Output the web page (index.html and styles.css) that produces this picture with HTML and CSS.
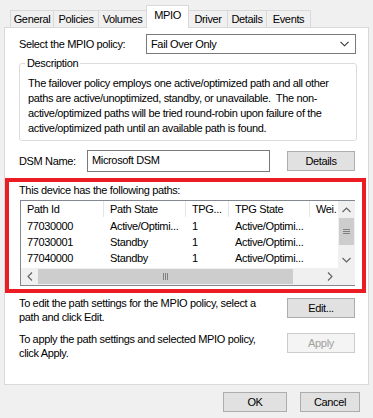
FILE: index.html
```html
<!DOCTYPE html>
<html lang="en">
<head>
    <meta charset="UTF-8">
    <meta name="viewport" content="width=device-width, initial-scale=1.0">
    <title>Properties - MPIO</title>
    <link rel="stylesheet" href="styles.css">
</head>
<body>
    <div class="tabs">
        <div class="tab tab-general">General</div>
        <div class="tab tab-policies">Policies</div>
        <div class="tab tab-volumes">Volumes</div>
        <div class="tab tab-active">MPIO</div>
        <div class="tab tab-driver">Driver</div>
        <div class="tab tab-details">Details</div>
        <div class="tab tab-events">Events</div>
    </div>

    <div class="panel">
        <div class="policy-row">
            <span class="policy-label">Select the MPIO policy:</span>
            <div class="select">
                <span>Fail Over Only</span>
                <svg class="select-arrow" width="9" height="6" viewBox="0 0 9 6"><path d="M0.5 0.8 L4.5 4.8 L8.5 0.8" fill="none" stroke="#333" stroke-width="1.1"/></svg>
            </div>
        </div>

        <fieldset class="group">
            <legend>Description</legend>
            <p class="group-text">The failover policy employs one active/optimized path and all other<br>paths are active/unoptimized, standby, or unavailable.&nbsp; The non-<br>active/optimized paths will be tried round-robin upon failure of the<br>active/optimized path until an available path is found.</p>
        </fieldset>

        <div class="dsm-row">
            <span class="dsm-label">DSM Name:</span>
            <div class="textbox">Microsoft DSM</div>
            <button class="btn">Details</button>
        </div>

        <div class="highlight">
            <div class="paths-label">This device has the following paths:</div>
            <div class="listview">
                <div class="list-body">
                    <div class="list-row list-head">
                        <span class="col col-id">Path Id</span>
                        <span class="col col-state">Path State</span>
                        <span class="col col-tpg">TPG...</span>
                        <span class="col col-tpgstate">TPG State</span>
                        <span class="col col-wei">Wei.</span>
                    </div>
                    <div class="list-row">
                        <span class="col col-id">77030000</span>
                        <span class="col col-state">Active/Optimi...</span>
                        <span class="col col-tpg">1</span>
                        <span class="col col-tpgstate">Active/Optimi...</span>
                        <span class="col col-wei"></span>
                    </div>
                    <div class="list-row">
                        <span class="col col-id">77030001</span>
                        <span class="col col-state">Standby</span>
                        <span class="col col-tpg">1</span>
                        <span class="col col-tpgstate">Active/Optimi...</span>
                        <span class="col col-wei"></span>
                    </div>
                    <div class="list-row">
                        <span class="col col-id">77040000</span>
                        <span class="col col-state">Standby</span>
                        <span class="col col-tpg">1</span>
                        <span class="col col-tpgstate">Active/Optimi...</span>
                        <span class="col col-wei"></span>
                    </div>
                    <div class="list-row">
                        <span class="col col-id">77040001</span>
                        <span class="col col-state">Standby</span>
                        <span class="col col-tpg">1</span>
                        <span class="col col-tpgstate">Active/Optimi...</span>
                        <span class="col col-wei"></span>
                    </div>
                </div>

                <div class="vscroll">
                    <div class="sb-btn">
                        <svg width="9" height="6" viewBox="0 0 9 6"><path d="M0.5 5 L4.5 1 L8.5 5" fill="none" stroke="#606060" stroke-width="1.1"/></svg>
                    </div>
                    <div class="sb-thumb-v">
                        <svg width="7" height="6" viewBox="0 0 7 6"><path d="M0 0.5 H7 M0 2.5 H7 M0 4.5 H7" stroke="#808080" stroke-width="1"/></svg>
                    </div>
                    <div class="sb-track"></div>
                    <div class="sb-btn">
                        <svg width="9" height="6" viewBox="0 0 9 6"><path d="M0.5 1 L4.5 5 L8.5 1" fill="none" stroke="#606060" stroke-width="1.1"/></svg>
                    </div>
                </div>

                <div class="hscroll">
                    <div class="sb-btn">
                        <svg width="6" height="9" viewBox="0 0 6 9"><path d="M5 0.5 L1 4.5 L5 8.5" fill="none" stroke="#606060" stroke-width="1.1"/></svg>
                    </div>
                    <div class="sb-thumb-h">
                        <svg width="6" height="7" viewBox="0 0 6 7"><path d="M0.5 0 V7 M2.5 0 V7 M4.5 0 V7" stroke="#808080" stroke-width="1"/></svg>
                    </div>
                    <div class="sb-track"></div>
                    <div class="sb-btn">
                        <svg width="6" height="9" viewBox="0 0 6 9"><path d="M1 0.5 L5 4.5 L1 8.5" fill="none" stroke="#606060" stroke-width="1.1"/></svg>
                    </div>
                </div>

                <div class="sb-corner"></div>
            </div>
        </div>

        <div class="action-row">
            <p class="action-text">To edit the path settings for the MPIO policy, select a<br>path and click Edit.</p>
            <button class="btn btn-edit">Edit...</button>
        </div>

        <div class="action-row action-apply">
            <p class="action-text">To apply the path settings and selected MPIO policy,<br>click Apply.</p>
            <button class="btn btn-disabled" disabled>Apply</button>
        </div>
    </div>

    <div class="footer">
        <button class="btn btn-ok">OK</button>
        <button class="btn btn-cancel">Cancel</button>
    </div>
</body>
</html>
```

FILE: styles.css
```css
body {
    margin: 0;
    width: 373px;
    height: 418px;
    overflow: hidden;
    background-color: #f0f0f0;
    font-family: "Liberation Sans", Arial, sans-serif;
    font-size: 11px;
    letter-spacing: -0.35px;
    color: #000;
}
p {
    margin: 0;
}

/* tab strip */
.tabs {
    display: flex;
    align-items: flex-end;
    height: 22px;
    margin-top: 5px;
    padding-left: 10px;
}
.tab {
    height: 17px;
    box-sizing: border-box;
    border: 1px solid #d9d9d9;
    border-bottom: none;
    margin-left: -1px;
    line-height: 16px;
    text-align: center;
    background-color: #f0f0f0;
}
.tab-general { width: 44px; margin-left: 0; }
.tab-policies { width: 46px; }
.tab-volumes { width: 49px; }
.tab-driver { width: 40px; }
.tab-details { width: 40px; }
.tab-events { width: 45px; }
.tab-active {
    width: 43px;
    height: 23px;
    margin-bottom: -1px;
    line-height: 19px;
    background-color: #fff;
    position: relative;
    z-index: 1;
}

/* main page */
.panel {
    box-sizing: border-box;
    width: 365px;
    height: 358px;
    margin-left: 4px;
    border: 1px solid #d9d9d9;
    background-color: #fff;
}
.policy-row {
    display: flex;
    align-items: center;
    height: 20px;
    margin-top: 6px;
    padding-left: 14px;
}
.policy-label {
    width: 127px;
}
.select {
    box-sizing: border-box;
    width: 210px;
    height: 20px;
    border: 1px solid #7a7a7a;
    display: flex;
    align-items: center;
    justify-content: space-between;
    padding: 0 6px 0 4px;
}
.group {
    margin: 2px 11px 0 14px;
    padding: 0 4px 4px 8px;
    border: 1px solid #dcdcdc;
    border-radius: 3px;
    min-width: 0;
}
.group legend {
    padding: 0 2px;
    margin-left: -3px;
    line-height: 14px;
}
.group-text {
    margin-top: 6px;
    line-height: 15px;
    white-space: nowrap;
}
.dsm-row {
    display: flex;
    align-items: center;
    height: 22px;
    margin-top: 9px;
    padding-left: 14px;
}
.dsm-label {
    width: 68px;
}
.textbox {
    box-sizing: border-box;
    width: 183px;
    height: 22px;
    border: 1px solid #7a7a7a;
    padding: 3px 0 0 4px;
    margin-right: 17px;
}
.btn {
    box-sizing: border-box;
    width: 68px;
    height: 20px;
    padding: 0;
    border: 1px solid #adadad;
    background-color: #e1e1e1;
    font-family: inherit;
    font-size: 11px;
    letter-spacing: -0.35px;
    color: #000;
}
.btn-disabled {
    border-color: #cccccc;
    background-color: #f4f4f4;
    color: #a0a0a0;
}

/* annotated path list */
.highlight {
    margin: 6px 2px 0 0;
    border: 4px solid #ec1c24;
    padding: 0 0 3px 10px;
}
.paths-label {
    line-height: 16px;
}
.listview {
    box-sizing: border-box;
    width: 335px;
    height: 86px;
    margin: 2px 0 0 1px;
    border: 1px solid #828790;
    display: grid;
    grid-template-columns: 317px 17px;
    grid-template-rows: 67px 17px;
}
.list-body {
    overflow: hidden;
}
.list-row {
    display: flex;
    height: 16px;
    line-height: 16px;
    white-space: nowrap;
}
.col {
    box-sizing: border-box;
    flex: none;
    overflow: hidden;
    padding-left: 6px;
}
.col-id { width: 83px; }
.col-state { width: 82px; }
.col-tpg { width: 43px; }
.col-tpgstate { width: 81px; }
.col-wei { width: 28px; }
.list-head .col {
    border-right: 1px solid #e5e5e5;
}
.list-head .col-wei {
    border-right: none;
}
.list-head {
    margin-bottom: 1px;
}
.vscroll {
    display: flex;
    flex-direction: column;
    background-color: #f0f0f0;
}
.hscroll {
    display: flex;
    background-color: #f0f0f0;
}
.sb-btn {
    flex: none;
    width: 17px;
    height: 17px;
    display: flex;
    align-items: center;
    justify-content: center;
}
.sb-track {
    flex: 1;
}
.sb-thumb-v {
    height: 27px;
    margin: 0 1px;
    background-color: #cdcdcd;
    display: flex;
    align-items: center;
    justify-content: center;
}
.sb-thumb-h {
    width: 255px;
    margin: 1px 0;
    background-color: #cdcdcd;
    display: flex;
    align-items: center;
    justify-content: center;
}
.sb-corner {
    background-color: #f0f0f0;
}

/* bottom actions */
.action-row {
    display: flex;
    align-items: flex-start;
    justify-content: space-between;
    padding: 0 13px 0 14px;
}
.action-text {
    padding-top: 3px;
    line-height: 14px;
}
.btn-edit {
    margin-top: 5px;
}
.action-apply {
    margin-top: 8px;
}
.action-apply .action-text {
    padding-top: 0;
}
.action-apply .btn {
    margin-top: 1px;
}
.footer {
    display: flex;
    justify-content: flex-end;
    gap: 13px;
    margin-top: 7px;
    padding-right: 13px;
}
.btn-ok {
    width: 64px;
}
.btn-cancel {
    width: 60px;
}
```
